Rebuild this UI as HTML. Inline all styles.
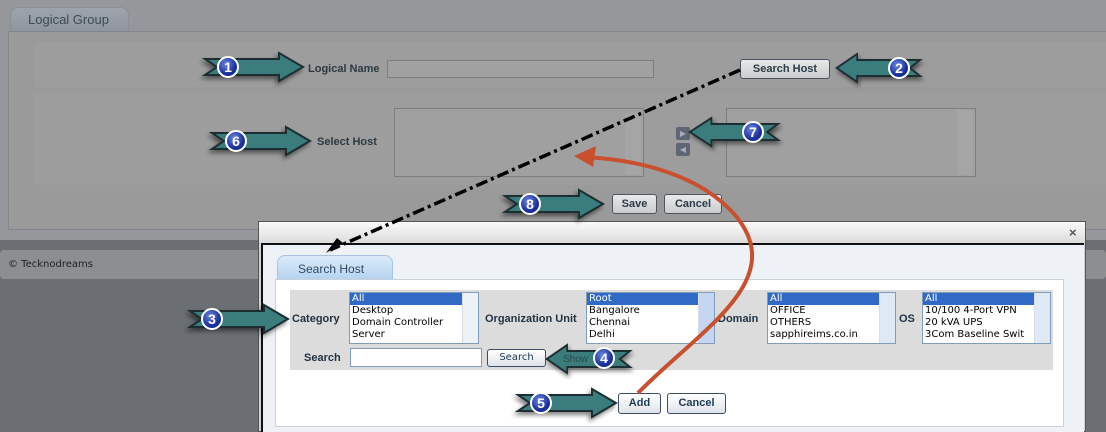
<!DOCTYPE html>
<html><head><meta charset="utf-8">
<style>
*{margin:0;padding:0;box-sizing:border-box}
body{width:1106px;height:432px;overflow:hidden;background:#95979a;position:relative;font-family:"Liberation Sans",sans-serif}
.a{position:absolute}
.b{font-weight:bold;font-size:11px;color:#2c3a40}
.btn{position:absolute;border:1px solid #4a5560;border-radius:3px;background:linear-gradient(#e8eaea,#c9cccc);font-weight:bold;font-size:11px;color:#2c3a48;text-align:center}
.dbtn{position:absolute;border:1px solid #3b4f63;border-radius:3px;background:linear-gradient(#ffffff,#dfe4ea);font-weight:bold;font-size:11px;color:#1e3a55;text-align:center}
.lst{position:absolute;background:#fff;border:1px solid #7f9db9;font-family:"DejaVu Sans",sans-serif;font-size:10px;color:#000;line-height:12px;overflow:hidden}
.lst div{padding-left:2px;white-space:nowrap}
.lst .s{background:#316ac5;color:#fff}
.sb{position:absolute;right:0;top:0;bottom:0;width:16px;background:#eef1f5;border-left:1px solid #d8dee6}
</style></head><body>
<!-- top page -->
<div class="a" style="left:10px;top:7px;width:119px;height:25px;border-radius:8px 8px 0 0;background:linear-gradient(#9da4ac,#8d959e);border:1px solid #8a9099;border-bottom:none;color:#3d4a55;font-size:13px;padding:4px 0 0 17px">Logical Group</div>
<div class="a" style="left:8px;top:31px;width:1100px;height:199px;border:1px solid #84878a;background:#9a9a9b"></div>
<div class="a" style="left:35px;top:42px;width:1071px;height:45px;background:#9d9d9e"></div>
<div class="a" style="left:35px;top:93px;width:1071px;height:92px;background:#9d9d9e"></div>
<div class="a b" style="left:308px;top:63px">Logical Name</div>
<div class="a" style="left:387px;top:60px;width:267px;height:18px;border:1px solid #7b7f83;background:#a1a1a2"></div>
<div class="btn" style="left:740px;top:59px;width:90px;height:20px;line-height:18px">Search Host</div>
<div class="a b" style="left:317px;top:136px">Select Host</div>
<div class="a" style="left:394px;top:108px;width:250px;height:69px;border:1px solid #7b7f83;background:#a0a0a1"></div>
<div class="a" style="left:625px;top:113px;width:16px;height:62px;background:#a5a5a6"></div>
<div class="a" style="left:726px;top:108px;width:250px;height:69px;border:1px solid #7b7f83;background:#a0a0a1"></div>
<div class="a" style="left:957px;top:110px;width:16px;height:65px;background:#a5a5a6"></div>
<div class="a" style="left:676px;top:127px;width:14px;height:13px;background:#5e6574;border-radius:2px;color:#aab;font-size:8px;text-align:center;line-height:13px">▶</div>
<div class="a" style="left:676px;top:143px;width:14px;height:13px;background:#5e6574;border-radius:2px;color:#aab;font-size:8px;text-align:center;line-height:13px">◀</div>
<div class="btn" style="left:612px;top:194px;width:45px;height:20px;line-height:18px">Save</div>
<div class="btn" style="left:664px;top:194px;width:58px;height:20px;line-height:18px">Cancel</div>
<!-- footer -->
<div class="a" style="left:0;top:240px;width:1106px;height:192px;background:#6b6e73"></div>
<div class="a" style="left:0;top:250px;width:1106px;height:29px;background:#8d8e90;border-radius:4px;color:#222;font-size:10px;padding:9px 0 0 8px;font-family:'DejaVu Sans',sans-serif">© Tecknodreams</div>
<!-- dialog -->
<div class="a" style="left:258px;top:221px;width:828px;height:211px;background:#cfd2d4;border:1px solid #555"></div>
<div class="a" style="left:259px;top:222px;width:826px;height:21px;background:linear-gradient(#fafafa,#dcdcdc)"></div>
<div class="a" style="left:1069px;top:225px;font-size:13px;color:#555;font-weight:bold">×</div>
<div class="a" style="left:261px;top:243px;width:823px;height:189px;background:#eef2f6;border-top:2px solid #111;border-left:2px solid #111"></div>
<div class="a" style="left:277px;top:255px;width:116px;height:25px;border-radius:8px 8px 0 0;background:linear-gradient(#dcebfa,#b5d2ef);border:1px solid #a8c4de;border-bottom:none;color:#2d4a66;font-size:12px;padding:6px 0 0 20px">Search Host</div>
<div class="a" style="left:275px;top:279px;width:789px;height:148px;background:#fff;border:1px solid #c8d2dc"></div>
<div class="a" style="left:290px;top:290px;width:763px;height:80px;background:#dcdcdc"></div>
<div class="a b" style="left:292px;top:313px;color:#234">Category</div>
<div class="lst" style="left:349px;top:292px;width:130px;height:52px"><div class="s">All</div><div>Desktop</div><div>Domain Controller</div><div>Server</div><div class="sb"></div></div>
<div class="a b" style="left:485px;top:313px;color:#234">Organization Unit</div>
<div class="lst" style="left:586px;top:292px;width:129px;height:52px"><div class="s">Root</div><div>Bangalore</div><div>Chennai</div><div>Delhi</div><div class="sb" style="background:#c4d6f2"></div></div>
<div class="a b" style="left:718px;top:313px;color:#234">Domain</div>
<div class="lst" style="left:767px;top:292px;width:129px;height:52px"><div class="s">All</div><div>OFFICE</div><div>OTHERS</div><div>sapphireims.co.in</div><div class="sb" style="background:#dfe8f5"></div></div>
<div class="a b" style="left:899px;top:313px;color:#234">OS</div>
<div class="lst" style="left:922px;top:292px;width:129px;height:52px"><div class="s">All</div><div>10/100 4-Port VPN</div><div>20 kVA UPS</div><div>3Com Baseline Swit</div><div class="sb" style="background:#dfe8f5"></div></div>
<div class="a b" style="left:304px;top:352px;color:#234">Search</div>
<div class="a" style="left:350px;top:348px;width:132px;height:19px;border:1px solid #7f9db9;background:#fff"></div>
<div class="dbtn" style="left:487px;top:349px;width:59px;height:18px;line-height:16px;font-weight:normal;font-family:'DejaVu Sans',sans-serif;font-size:10px">Search</div>
<div class="dbtn" style="left:618px;top:393px;width:43px;height:21px;line-height:19px">Add</div>
<div class="dbtn" style="left:667px;top:393px;width:59px;height:21px;line-height:19px">Cancel</div>

<svg class="a" style="left:0;top:0" width="1106" height="432" viewBox="0 0 1106 432">
<defs>
<filter id="sh" x="-20%" y="-30%" width="140%" height="170%"><feGaussianBlur in="SourceAlpha" stdDeviation="2.5"/><feOffset dx="-2" dy="3"/><feComponentTransfer><feFuncA type="linear" slope="0.5"/></feComponentTransfer><feMerge><feMergeNode/><feMergeNode in="SourceGraphic"/></feMerge></filter>
<g id="ar"><polygon points="0,6 74,6 74,0 98,14 74,28 74,22 0,22 12,14" fill="#3a7b7c" stroke="#1d2f30" stroke-width="2" filter="url(#sh)"/></g>
<radialGradient id="cg" cx="40%" cy="35%"><stop offset="0" stop-color="#6a86e0"/><stop offset="1" stop-color="#1a2f9a"/></radialGradient>
</defs>
<path d="M740,70 L330,250" stroke="#000" stroke-width="3.5" stroke-dasharray="12,4,3,4" fill="none"/>
<polygon points="326,253 343,243 337,238" fill="#000"/>
<path d="M638,393 C700,330 790,280 735,215 C700,175 640,160 585,157" stroke="#c8502f" stroke-width="4" fill="none"/>
<polygon points="574,156 596,146 593,167" fill="#c8502f"/>
<use href="#ar" transform="translate(205,53)"/>
<use href="#ar" transform="translate(920,54) scale(-0.85,1)"/>
<use href="#ar" transform="translate(212,127)"/>
<use href="#ar" transform="translate(778,118) scale(-0.9,1)"/>
<use href="#ar" transform="translate(505,190)"/>
<use href="#ar" transform="translate(190,305)"/>
<use href="#ar" transform="translate(630,345) scale(-0.85,1)"/>
<use href="#ar" transform="translate(518,389)"/>
<g font-family="Liberation Sans" font-weight="bold" font-size="14" fill="#fff" text-anchor="middle" stroke="#fff">
<g stroke-width="2"><circle cx="228" cy="67" r="10" fill="url(#cg)"/><circle cx="899" cy="68" r="10" fill="url(#cg)"/><circle cx="236" cy="141" r="10" fill="url(#cg)"/><circle cx="753" cy="132" r="10" fill="url(#cg)"/><circle cx="530" cy="204" r="10" fill="url(#cg)"/><circle cx="212" cy="319" r="10" fill="url(#cg)"/><circle cx="604" cy="358" r="10" fill="url(#cg)"/><circle cx="541" cy="403" r="10" fill="url(#cg)"/></g>
<g stroke="none"><text x="228" y="72">1</text><text x="899" y="73">2</text><text x="236" y="146">6</text><text x="753" y="137">7</text><text x="530" y="209">8</text><text x="212" y="324">3</text><text x="604" y="363">4</text><text x="541" y="408">5</text></g>
</g>
<text x="563" y="362" font-family="Liberation Sans" font-size="10" fill="#2a4a4a">Show</text>
</svg>
</body></html>
